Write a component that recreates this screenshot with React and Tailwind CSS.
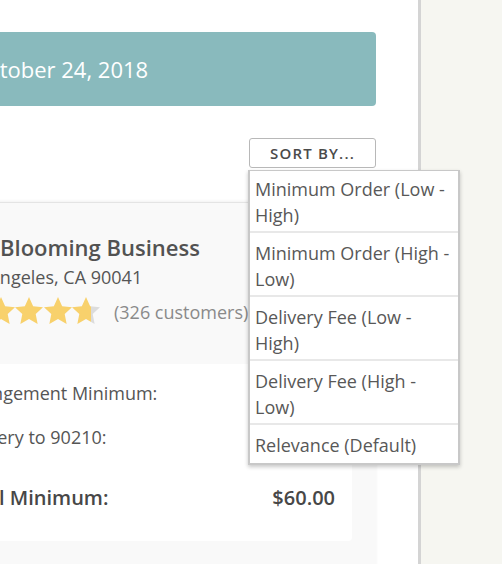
import React from 'react'

const sortOptions = [
  'Minimum Order (Low - High)',
  'Minimum Order (High - Low)',
  'Delivery Fee (Low - High)',
  'Delivery Fee (High - Low)',
  'Relevance (Default)',
]

const STAR = 'M50 3L64.1 33.6 97.6 37.5 72.8 60.4 79.4 93.5 50 77 20.6 93.5 27.2 60.4 2.4 37.5 35.9 33.6Z'

const Star = ({ fill = 1, id }) => (
  <svg width="28" height="27" viewBox="2.4 3 95.2 90.5" preserveAspectRatio="none" className="block">
    <defs>
      <linearGradient id={id} x1="0" x2="1" y1="0" y2="0">
        <stop offset={fill} stopColor="#f8d16c" />
        <stop offset={fill} stopColor="#dcdcdc" />
      </linearGradient>
    </defs>
    <path d={STAR} fill={`url(#${id})`} />
  </svg>
)

const App = () => {
  return (
    <div className="flex h-[564px] w-[502px] overflow-hidden bg-[#f6f6f1] font-['Open_Sans',sans-serif] text-[#555]">
      <div className="relative h-full w-[421px] shrink-0 border-r-[3px] border-[#d4d4d4] bg-white">
        <div className="ml-[-45px] w-[421px] pt-[32px]">
          {/* delivery date banner */}
          <div className="flex h-[74px] items-center rounded-r-[4px] bg-[#89babd] pl-[17px]">
            <span className="text-[22px] leading-[30px] text-white">October 24, 2018</span>
          </div>

          {/* sort */}
          <div className="mt-[32px] flex justify-end">
            <div className="relative">
              <button className="flex h-[30px] w-[127px] items-center justify-center rounded-[3px] border-[1.5px] border-[#b8b8b8] bg-white text-[15px] font-semibold tracking-[1.2px] text-[#4a4a4a]">
                SORT BY...
              </button>
              <ul className="absolute left-[-1px] top-[32px] z-10 w-[212px] border-x-2 border-t border-b-2 border-[#c8c8c8] bg-white shadow-[0_2px_4px_rgba(0,0,0,0.22)]">
                {sortOptions.map((opt, i) => (
                  <li
                    key={opt}
                    className={`px-[5px] text-[18px] leading-[26px] text-[#585858] ${i === 0 ? 'pt-[5px]' : 'border-t-2 border-[#e8e8e8] pt-[7px]'} ${i === sortOptions.length - 1 ? 'pb-[5px]' : 'pb-[3px]'}`}
                  >
                    {opt}
                  </li>
                ))}
              </ul>
            </div>
          </div>

          {/* florist card */}
          <div className="mt-[34px] border-t border-[#e4e4e4] bg-[#f9f9f9] pb-[40px] shadow-[0_-1px_3px_rgba(0,0,0,0.06)]">
            <div className="pt-[29px] pb-[38px]">
              <h2 className="pl-[45px] text-[22px] font-semibold leading-[30px] text-[#525252]">Blooming Business</h2>
              <p className="mt-[3px] text-[18px] leading-[24px]">Los Angeles, CA 90041</p>
              <div className="ml-[3px] mt-[9px] flex h-[28px] items-center">
                <div className="mb-[4px] flex gap-[0.5px]">
                  <Star id="s1" />
                  <Star id="s2" />
                  <Star id="s3" />
                  <Star id="s4" />
                  <Star id="s5" fill={0.68} />
                </div>
                <span className="ml-[14px] text-[18px] leading-[24px] text-[#8a8a8a]">(326 customers)</span>
              </div>
            </div>

            <div className="mr-[24px] rounded-br-[4px] bg-white pb-[29px] pl-[1px] pr-[17px] pt-[17px]">
              <p className="text-[18px] leading-[24px]">Arrangement Minimum:</p>
              <p className="mt-[20px] text-[18px] leading-[24px]">Delivery to 90210:</p>
              <div className="mt-[35px] flex items-center justify-between text-[20px] font-semibold leading-[28px] text-[#474747]">
                <span>Total Minimum:</span>
                <span>$60.00</span>
              </div>
            </div>
          </div>
        </div>
      </div>
    </div>
  )
}

export default App
